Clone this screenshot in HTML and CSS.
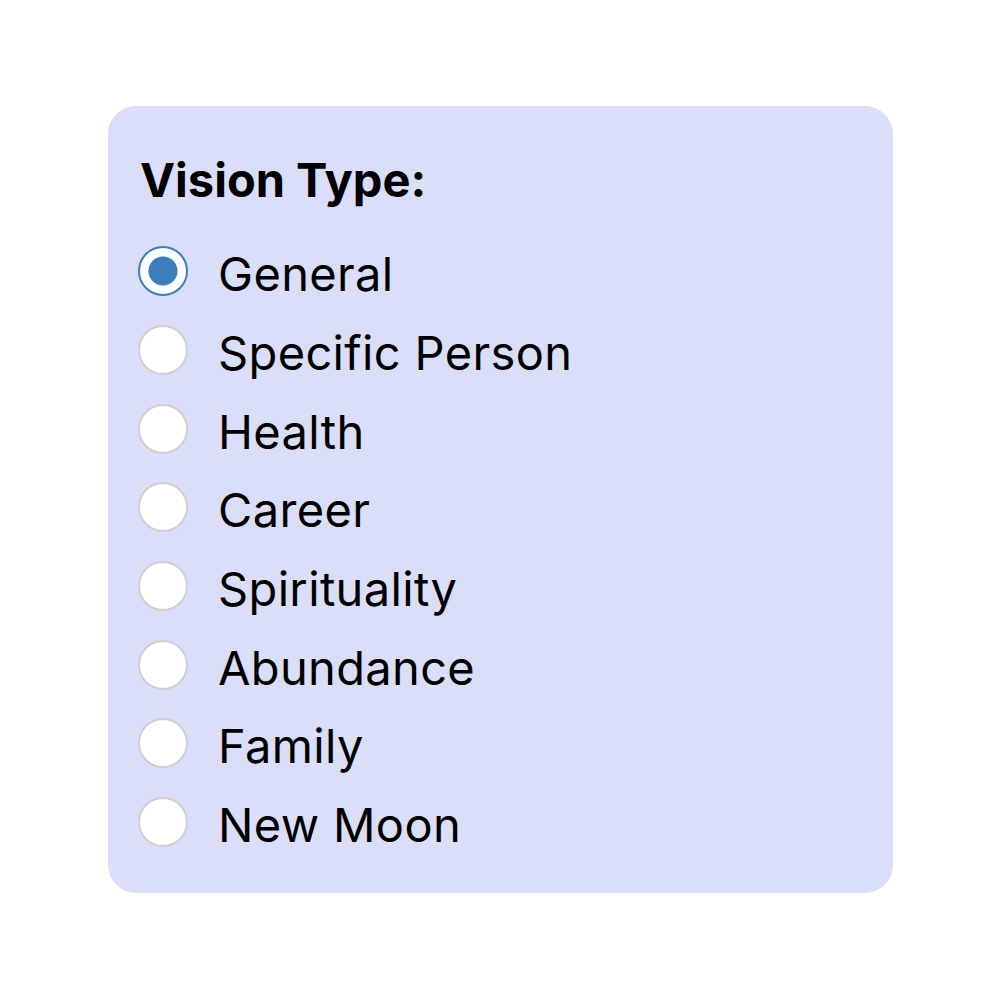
FILE: index.html
```html
<!DOCTYPE html>
<html lang="en">
<head>
  <meta charset="UTF-8" />
  <meta name="viewport" content="width=device-width, initial-scale=1.0" />
  <title>Vision Type</title>
  <link rel="stylesheet" href="styles.css">
</head>
<body>
  <form class="card">
    <div class="title">Vision Type:</div>
    <div class="options">
      <label class="option"><input type="radio" name="vision" checked> <span>General</span></label>
      <label class="option"><input type="radio" name="vision"> <span>Specific Person</span></label>
      <label class="option"><input type="radio" name="vision"> <span>Health</span></label>
      <label class="option"><input type="radio" name="vision"> <span>Career</span></label>
      <label class="option"><input type="radio" name="vision"> <span>Spirituality</span></label>
      <label class="option"><input type="radio" name="vision"> <span>Abundance</span></label>
      <label class="option"><input type="radio" name="vision"> <span>Family</span></label>
      <label class="option"><input type="radio" name="vision"> <span>New Moon</span></label>
    </div>
  </form>
</body>
</html>
```

FILE: styles.css
```css
* {
  box-sizing: border-box;
}

body {
  margin: 0;
  padding: 106px 108px;
  font-family: Inter, "Noto Sans", sans-serif;
  background-color: #ffffff;
  color: #000000;
}

.card {
  background-color: #dadef8;
  border-radius: 28px;
  padding: 44px 30px 40px 30px;
  height: 787px;
}

.title {
  font-size: 47px;
  font-weight: 700;
  line-height: 60px;
  margin-left: 2px;
  margin-bottom: 22px;
}

.options {
  display: flex;
  flex-direction: column;
}

.option {
  display: flex;
  align-items: center;
  gap: 30px;
  font-size: 47px;
  letter-spacing: 0.35px;
  line-height: 50px;
  height: 78.7px;
  cursor: pointer;
}

.option span {
  position: relative;
  top: 3px;
}

.option input {
  appearance: none;
  margin: 0;
  width: 50px;
  height: 50px;
  border-radius: 50%;
  border: 2.5px solid #cfcfcf;
  background-color: #ffffff;
  flex-shrink: 0;
}

.option input:checked {
  border-color: #3b7dbd;
  background: radial-gradient(circle, #3b7dbd 0 14px, #ffffff 15px);
}
```
